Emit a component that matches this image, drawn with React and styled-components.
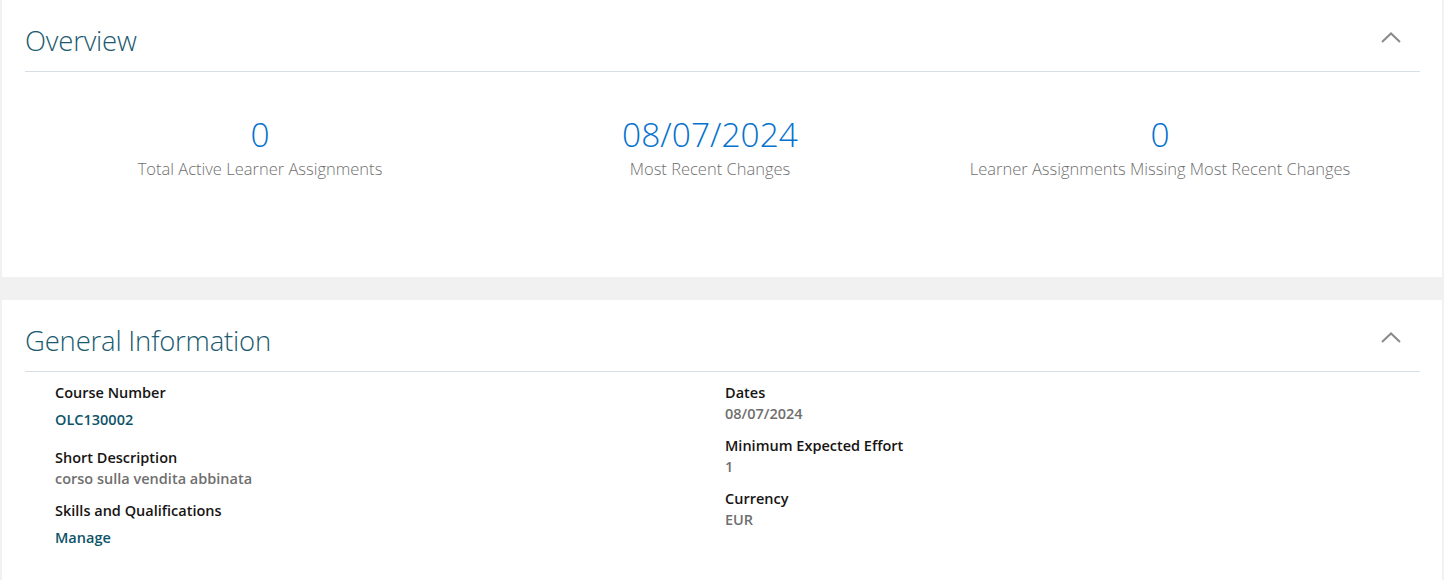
import React from "react";
import styled, { createGlobalStyle } from "styled-components";

const GlobalStyle = createGlobalStyle`
  html, body { margin: 0; padding: 0; background: #f1f1f1; }
  body { font-family: "Open Sans", "Noto Sans", sans-serif; }
  * { box-sizing: border-box; }
`;

const Page = styled.div`
  min-height: 100vh;
  padding: 0 2px;
  display: flex;
  flex-direction: column;
  gap: 23px;
`;

const Card = styled.section`
  background: #ffffff;
  padding: 0 22px 0 23px;
  flex: ${(p) => (p.$fill ? "1" : "none")};
`;

const Header = styled.div`
  height: 72px;
  display: flex;
  align-items: center;
  justify-content: space-between;
  padding-top: 10px;
  border-bottom: 1px solid #d6dfe6;
`;

const Title = styled.h2`
  margin: 0;
  font-weight: 300;
  font-size: 27.5px;
  color: #1b5a6e;
  letter-spacing: -0.2px;
`;

const Toggle = styled.button`
  border: 0;
  background: transparent;
  padding: 0;
  margin: 20px 18px 0 0;
  width: 22px;
  height: 14px;
  display: flex;
  align-items: center;
  justify-content: center;
  align-self: flex-start;
  cursor: pointer;
`;

const Stats = styled.div`
  display: grid;
  grid-template-columns: repeat(3, 450px);
  padding: 42px 0 96px 10px;
`;

const Stat = styled.div`
  display: flex;
  flex-direction: column;
  align-items: center;
`;

const StatValue = styled.div`
  font-size: 33.5px;
  font-weight: 300;
  line-height: 40px;
  color: #0572ce;
`;

const StatLabel = styled.div`
  margin-top: 3px;
  font-size: 16.5px;
  font-weight: 300;
  line-height: 24px;
  color: #6f6f6f;
`;

const Fields = styled.div`
  display: grid;
  grid-template-columns: 670px 670px;
  padding: 10px 0 20px 30px;
`;

const Column = styled.div`
  display: flex;
  flex-direction: column;
  gap: 11px;
`;

const Field = styled.div`
  display: flex;
  flex-direction: column;
`;

const Label = styled.div`
  font-size: 14.5px;
  font-weight: 600;
  line-height: 21px;
  color: #161513;
`;

const Value = styled.div`
  font-size: 14.5px;
  font-weight: 600;
  line-height: 21px;
  color: ${(p) => (p.$link ? "#0d5469" : "#6f6f6f")};
  padding: ${(p) => (p.$link ? "6px 0" : "0")};
`;

const Chevron = () => (
  <svg width="20" height="11" viewBox="0 0 20 11" fill="none">
    <polyline points="1,10 10,1.5 19,10" stroke="#8a8a8a" strokeWidth="2" />
  </svg>
);

const Section = ({ title, children, fill }) => (
  <Card $fill={fill}>
    <Header>
      <Title>{title}</Title>
      <Toggle aria-label="Collapse">
        <Chevron />
      </Toggle>
    </Header>
    {children}
  </Card>
);

const stats = [
  { value: "0", label: "Total Active Learner Assignments" },
  { value: "08/07/2024", label: "Most Recent Changes" },
  { value: "0", label: "Learner Assignments Missing Most Recent Changes" },
];

const left = [
  { label: "Course Number", value: "OLC130002", link: true },
  { label: "Short Description", value: "corso sulla vendita abbinata" },
  { label: "Skills and Qualifications", value: "Manage", link: true },
];

const right = [
  { label: "Dates", value: "08/07/2024" },
  { label: "Minimum Expected Effort", value: "1" },
  { label: "Currency", value: "EUR" },
];

const FieldColumn = ({ items }) => (
  <Column>
    {items.map((f) => (
      <Field key={f.label}>
        <Label>{f.label}</Label>
        <Value $link={f.link}>{f.value}</Value>
      </Field>
    ))}
  </Column>
);

export default function App() {
  return (
    <>
      <GlobalStyle />
      <Page>
        <Section title="Overview">
          <Stats>
            {stats.map((s) => (
              <Stat key={s.label}>
                <StatValue>{s.value}</StatValue>
                <StatLabel>{s.label}</StatLabel>
              </Stat>
            ))}
          </Stats>
        </Section>
        <Section title="General Information" fill>
          <Fields>
            <FieldColumn items={left} />
            <FieldColumn items={right} />
          </Fields>
        </Section>
      </Page>
    </>
  );
}
